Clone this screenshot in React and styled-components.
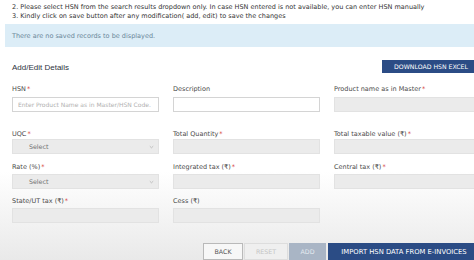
import React from "react";
import styled, { createGlobalStyle } from "styled-components";

const GlobalStyle = createGlobalStyle`
  html, body {
    margin: 0;
    padding: 0;
    overflow: hidden;
  }
  body {
    width: 474px;
    height: 260px;
    background: linear-gradient(180deg, #ffffff 0%, #ffffff 66%, #e9e9e9 100%);
    font-family: "DejaVu Sans", Verdana, sans-serif;
    color: #333;
  }
`;

const Page = styled.div`
  width: 468px;
  padding-left: 12px;
  display: flex;
  flex-direction: column;
`;

const Notes = styled.div`
  margin-top: 3px;
  font-size: 6.5px;
  line-height: 9px;
  color: #333;
  white-space: nowrap;
`;

const Alert = styled.div`
  margin: 3px 0 0 -7px;
  padding: 0 7px;
  height: 23px;
  display: flex;
  align-items: center;
  background: #dcedf7;
  color: #6a8799;
  font-size: 6.5px;
`;

const Header = styled.div`
  margin-top: 13px;
  display: flex;
  align-items: center;
  justify-content: space-between;
`;

const Title = styled.div`
  font-family: "Liberation Sans", Arial, sans-serif;
  font-size: 8px;
  color: #2e3440;
  padding-top: 2px;
`;

const Button = styled.button`
  box-sizing: border-box;
  width: ${(p) => (p.$w ? `${p.$w}px` : "auto")};
  height: ${(p) => p.$h || 13}px;
  padding: 0 ${(p) => p.$px ?? 12}px;
  margin-left: ${(p) => p.$ml || 0}px;
  border: 1px solid ${(p) => p.$border || "#2b4c85"};
  background: ${(p) => p.$bg || "#2b4c85"};
  color: ${(p) => p.$color || "#ffffff"};
  font-family: "DejaVu Sans", Verdana, sans-serif;
  font-size: ${(p) => p.$fs || 6.8}px;
  text-transform: uppercase;
  white-space: nowrap;
  cursor: pointer;
`;

const Row = styled.div`
  margin-top: ${(p) => p.$mt}px;
  display: grid;
  grid-template-columns: 147px 147px 147px;
  column-gap: 14px;
`;

const Field = styled.div`
  display: flex;
  flex-direction: column;
`;

const Label = styled.label`
  font-size: 6.5px;
  line-height: 8px;
  color: #4a4a4a;
  margin-bottom: ${(p) => p.$gap}px;
  white-space: nowrap;
`;

const Star = styled.span`
  color: #d2322d;
  margin-left: 1px;
`;

const Input = styled.input`
  box-sizing: border-box;
  width: 147px;
  height: 15px;
  padding: 0 4px 0 5px;
  border: 1px solid ${(p) => (p.disabled ? "#e2e2e2" : "#d4d4d4")};
  background: ${(p) => (p.disabled ? "#ebebeb" : "#ffffff")};
  font-family: "DejaVu Sans", Verdana, sans-serif;
  font-size: 6px;
  color: #555;
  outline: none;
  &::placeholder {
    color: #b0b0b0;
  }
`;

const SelectBox = styled.div`
  box-sizing: border-box;
  width: 147px;
  height: 15px;
  padding: 0 4px 0 16px;
  display: flex;
  align-items: center;
  justify-content: space-between;
  border: 1px solid #e2e2e2;
  background: #ebebeb;
  font-size: 6.3px;
  color: #707070;
`;

const Actions = styled.div`
  margin-top: 20px;
  display: flex;
  justify-content: flex-end;
  gap: 1px;
`;

const Chevron = () => (
  <svg width="5" height="4" viewBox="0 0 5 4">
    <path d="M0.8 1.2 L2.5 2.8 L4.2 1.2" fill="none" stroke="#b5b5b5" strokeWidth="0.8" />
  </svg>
);

const Req = ({ children }) => (
  <>
    {children}
    <Star>*</Star>
  </>
);

const Select = () => (
  <SelectBox>
    <span>Select</span>
    <Chevron />
  </SelectBox>
);

export default function App() {
  return (
    <>
      <GlobalStyle />
      <Page>
        <Notes>
          <div>2. Please select HSN from the search results dropdown only. In case HSN entered is not available, you can enter HSN manually</div>
          <div>3. Kindly click on save button after any modification( add, edit) to save the changes</div>
        </Notes>
        <Alert>There are no saved records to be displayed.</Alert>

        <Header>
          <Title>Add/Edit Details</Title>
          <Button $w={98} $px={0} $fs={6.2}>Download HSN Excel</Button>
        </Header>

        <Row $mt={12}>
          <Field>
            <Label $gap={4}><Req>HSN</Req></Label>
            <Input placeholder="Enter Product Name as in Master/HSN Code." />
          </Field>
          <Field>
            <Label $gap={4}>Description</Label>
            <Input />
          </Field>
          <Field>
            <Label $gap={4}><Req>Product name as in Master</Req></Label>
            <Input disabled />
          </Field>
        </Row>

        <Row $mt={18}>
          <Field>
            <Label $gap={1}><Req>UQC</Req></Label>
            <Select />
          </Field>
          <Field>
            <Label $gap={1}><Req>Total Quantity</Req></Label>
            <Input disabled />
          </Field>
          <Field>
            <Label $gap={1}><Req>Total taxable value (₹)</Req></Label>
            <Input disabled />
          </Field>
        </Row>

        <Row $mt={9}>
          <Field>
            <Label $gap={3}><Req>Rate (%)</Req></Label>
            <Select />
          </Field>
          <Field>
            <Label $gap={3}><Req>Integrated tax (₹)</Req></Label>
            <Input disabled />
          </Field>
          <Field>
            <Label $gap={3}><Req>Central tax (₹)</Req></Label>
            <Input disabled />
          </Field>
        </Row>

        <Row $mt={8}>
          <Field>
            <Label $gap={3}><Req>State/UT tax (₹)</Req></Label>
            <Input disabled />
          </Field>
          <Field>
            <Label $gap={3}>Cess (₹)</Label>
            <Input disabled />
          </Field>
        </Row>

        <Actions>
          <Button $h={17} $w={40} $px={0} $fs={6.3} $bg="#f7f7f7" $border="#b9b9b9" $color="#555">Back</Button>
          <Button $h={17} $w={44} $px={0} $fs={6.3} $bg="#efefef" $border="#dddddd" $color="#c4c4c4">Reset</Button>
          <Button $h={17} $w={37} $px={0} $fs={6.3} $bg="#a9b5c5" $border="#a9b5c5" $color="#e6ebf1">Add</Button>
          <Button $h={17} $w={152} $px={0} $ml={1}>Import HSN data from E-Invoices</Button>
        </Actions>
      </Page>
    </>
  );
}
